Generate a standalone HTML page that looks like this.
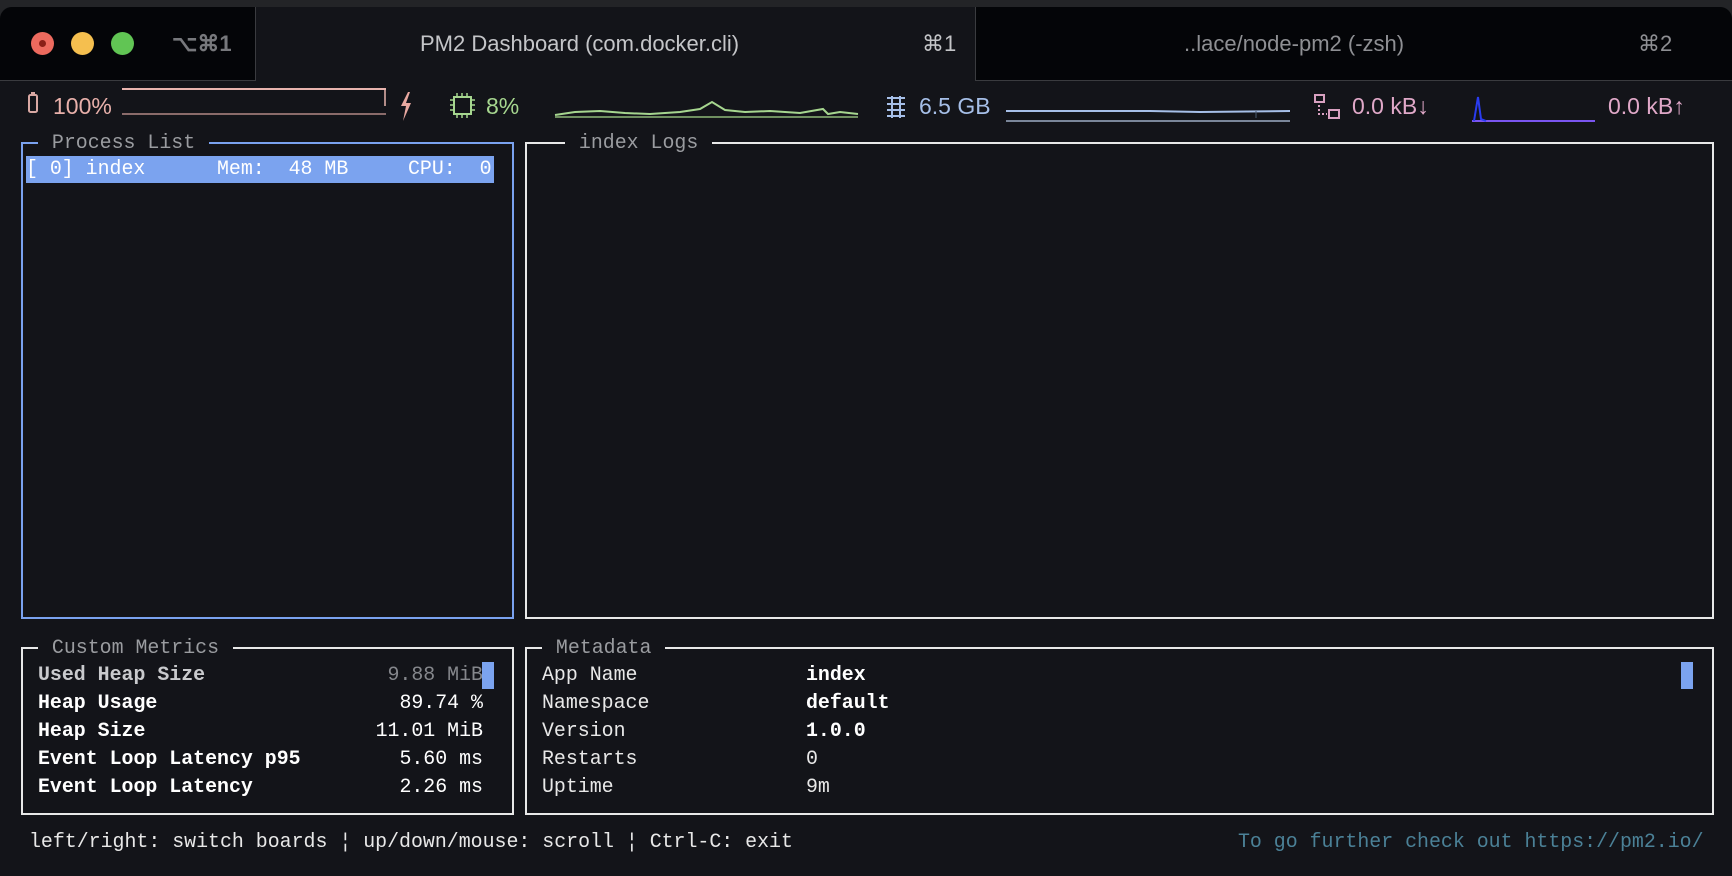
<!DOCTYPE html>
<html><head><meta charset="utf-8"><style>
*{margin:0;padding:0;box-sizing:border-box}
body{width:1732px;height:876px;background:#232427;position:relative;overflow:hidden;font-family:"Liberation Sans",sans-serif}
.win{position:absolute;left:0;top:7px;width:1732px;height:869px;background:#131419;border-radius:12px 12px 0 0;overflow:hidden}
.tab{position:absolute;top:0;height:74px;color:#8e8f93;font-size:22px;line-height:74px}
.a{position:absolute;white-space:pre}
.m{font-family:"Liberation Mono",monospace;font-size:19.9px;white-space:pre;position:absolute;line-height:28px}
.box{position:absolute;border:2px solid #e8e8e8}
.ttl{position:absolute;top:-15px;background:#131419;color:#9a9ca0;padding:0 2px;font-family:"Liberation Mono",monospace;font-size:19.9px;line-height:28px;white-space:pre}
.dot{position:absolute;top:25px;width:23px;height:23px;border-radius:50%}
.st{position:absolute;white-space:pre;top:86px;font-size:23px}
</style></head><body>
<div class="win">
 <div class="tab" style="left:0;width:256px;background:#040508;border-right:1px solid #3a3b3f;border-bottom:1px solid #3a3b3f">
  <div class="dot" style="left:31px;background:#ed6a5e"><div style="position:absolute;left:8px;top:8px;width:7px;height:7px;border-radius:50%;background:#8a1f17"></div></div>
  <div class="dot" style="left:71px;background:#f5bf4f"></div>
  <div class="dot" style="left:111px;background:#61c554"></div>
  <div class="a" style="left:172px;top:0;font-weight:bold;color:#77787c">⌥⌘1</div>
 </div>
 <div class="tab" style="left:256px;width:719px;background:#131419;color:#c4c5c8">
  <div class="a" style="left:164px">PM2 Dashboard (com.docker.cli)</div>
  <div class="a" style="left:666px">⌘1</div>
 </div>
 <div class="tab" style="left:975px;width:757px;background:#040508;border-left:1px solid #3a3b3f;border-bottom:1px solid #3a3b3f">
  <div class="a" style="left:208px">..lace/node-pm2 (-zsh)</div>
  <div class="a" style="left:662px">⌘2</div>
 </div>

 <svg class="a" style="left:0;top:74px" width="1732" height="50">
  <g transform="translate(0,5)">
  <rect x="29" y="9" width="8" height="17" rx="1.5" fill="none" stroke="#d9a8a3" stroke-width="2"/><rect x="31" y="6" width="4" height="3" fill="#d9a8a3"/>
  <path d="M408 6 L401 20 L406 20 L403 35 L411 17 L406 17 L410 6Z" fill="#e8a8a0"/>
  <rect x="454" y="11" width="17" height="17" fill="none" stroke="#a6d68f" stroke-width="2"/>
  <path d="M457 7v4M462 7v4M467 7v4M457 28v4M462 28v4M467 28v4M450 14h4M450 19h4M450 24h4M471 14h4M471 19h4M471 24h4" stroke="#a6d68f" stroke-width="1.5"/>
  <path d="M887 12h18M887 18h18M887 24h18M887 30h18M892 10v22M900 10v22" stroke="#a6bfe8" stroke-width="2"/>
  <rect x="1315" y="9" width="9" height="7" fill="none" stroke="#d8a0c0" stroke-width="2"/>
  <rect x="1329" y="24" width="10" height="8" fill="none" stroke="#d8a0c0" stroke-width="2"/>
  <path d="M1319 19v9h8" stroke="#d8a0c0" stroke-width="2" stroke-dasharray="2 2" fill="none"/>
  </g>
  <line x1="122" y1="8" x2="386" y2="8" stroke="#e8b4ae" stroke-width="2"/>
  <line x1="122" y1="33" x2="386" y2="33" stroke="#8a6b6a" stroke-width="2"/>
  <line x1="385" y1="8" x2="385" y2="25" stroke="#e8b4ae" stroke-width="1.5"/>
  <polyline points="555,34 575,31 600,30 625,32 650,33 680,31 700,28 712,21 725,29 745,31 770,30 800,32 823,28 828,33 840,31 858,33" fill="none" stroke="#a6d68f" stroke-width="2"/>
  <line x1="555" y1="36" x2="858" y2="36" stroke="#6f8f60" stroke-width="2"/>
  <polyline points="1006,30 1150,30 1200,31 1290,30" fill="none" stroke="#a6bfe8" stroke-width="2"/>
  <line x1="1256" y1="30" x2="1256" y2="37" stroke="#4a5a70" stroke-width="1"/>
  <line x1="1006" y1="40" x2="1290" y2="40" stroke="#7a8699" stroke-width="2"/>
  <line x1="1472" y1="40" x2="1595" y2="40" stroke="#7a55f0" stroke-width="2"/>
  <path d="M1474 40 L1478 16 L1481 38 L1486 40" fill="none" stroke="#2a3cf0" stroke-width="2"/>
 </svg>
 <div class="st" style="left:53px;color:#e8b0aa">100%</div>
 <div class="st" style="left:486px;color:#a6d68f">8%</div>
 <div class="st" style="left:919px;color:#a6bfe8">6.5 GB</div>
 <div class="st" style="left:1352px;color:#e0a8c8">0.0 kB↓</div>
 <div class="st" style="left:1608px;color:#e0a8c8">0.0 kB↑</div>

 <div class="box" style="left:21px;top:135px;width:493px;height:477px;border-color:#7aa2f0">
  <div class="ttl" style="left:15px"> Process List </div>
  <div style="position:absolute;left:3px;top:12px;width:468px;height:27px;background:#7ba3ef"></div>
  <div class="m" style="left:3px;top:11px;color:#fff">[ 0] index      Mem:  48 MB     CPU:  0</div>
 </div>
 <div class="box" style="left:525px;top:135px;width:1189px;height:477px">
  <div class="ttl" style="left:38px"> index Logs </div>
 </div>

 <div class="box" style="left:21px;top:640px;width:493px;height:168px">
  <div class="ttl" style="left:15px"> Custom Metrics </div>
  <div class="m" style="left:15px;top:12px;color:#c9cacd;font-weight:bold">Used Heap Size</div>
  <div class="m" style="right:29px;top:12px;color:#85878c">9.88 MiB</div>
  <div style="position:absolute;left:459px;top:13px;width:12px;height:27px;background:#7ba3ef"></div>
  <div class="m" style="left:15px;top:40px;color:#fff;font-weight:bold">Heap Usage</div>
  <div class="m" style="right:29px;top:40px;color:#fff">89.74 %</div>
  <div class="m" style="left:15px;top:68px;color:#fff;font-weight:bold">Heap Size</div>
  <div class="m" style="right:29px;top:68px;color:#fff">11.01 MiB</div>
  <div class="m" style="left:15px;top:96px;color:#fff;font-weight:bold">Event Loop Latency p95</div>
  <div class="m" style="right:29px;top:96px;color:#fff">5.60 ms</div>
  <div class="m" style="left:15px;top:124px;color:#fff;font-weight:bold">Event Loop Latency</div>
  <div class="m" style="right:29px;top:124px;color:#fff">2.26 ms</div>
 </div>

 <div class="box" style="left:525px;top:640px;width:1189px;height:168px">
  <div class="ttl" style="left:15px"> Metadata </div>
  <div class="m" style="left:15px;top:12px;color:#e8e8e8">App Name
Namespace
Version
Restarts
Uptime</div>
  <div class="m" style="left:279px;top:12px;color:#fff;font-weight:bold">index
default
1.0.0</div>
  <div class="m" style="left:279px;top:96px;color:#e8e8e8">0
9m</div>
  <div style="position:absolute;left:1154px;top:13px;width:12px;height:27px;background:#7ba3ef"></div>
 </div>

 <div class="m" style="left:29px;top:821px;color:#e8e8e8">left/right: switch boards ¦ up/down/mouse: scroll ¦ Ctrl-C: exit</div>
 <div class="m" style="left:1238px;top:821px;color:#4b8197">To go further check out https://pm2.io/</div>
</div>
</body></html>
